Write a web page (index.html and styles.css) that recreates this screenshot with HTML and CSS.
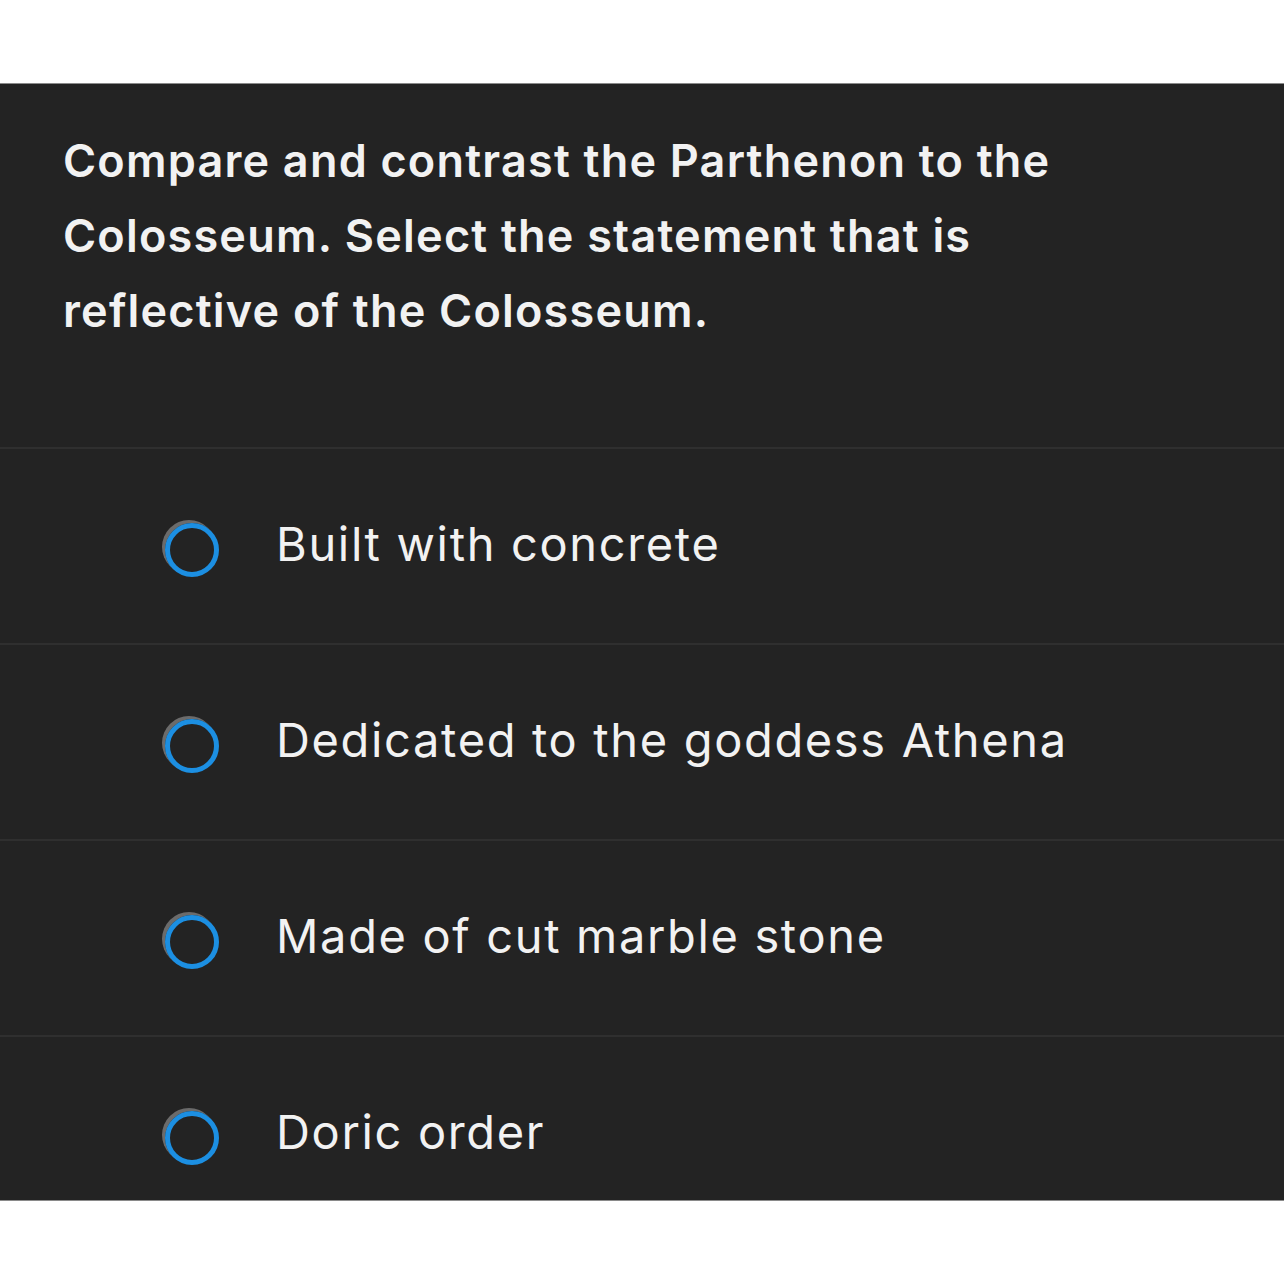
FILE: index.html
```html
<!DOCTYPE html>
<html lang="en">
<head>
  <meta charset="UTF-8">
  <title>Question</title>
  <link rel="stylesheet" href="styles.css">
</head>
<body>
  <div class="card">
    <div class="question">
      Compare and contrast the Parthenon to the Colosseum. Select the statement that is reflective of the Colosseum.
    </div>
    <div class="option">
      <span class="radio"></span>
      <span class="label">Built with concrete</span>
    </div>
    <div class="option">
      <span class="radio"></span>
      <span class="label">Dedicated to the goddess Athena</span>
    </div>
    <div class="option">
      <span class="radio"></span>
      <span class="label">Made of cut marble stone</span>
    </div>
    <div class="option last">
      <span class="radio"></span>
      <span class="label">Doric order</span>
    </div>
  </div>
</body>
</html>
```

FILE: styles.css
```css
body {
  margin: 0;
  padding: 83px 0 0;
  background-color: #fff;
  font-family: Inter, "Liberation Sans", sans-serif;
}
.card {
  background-color: #232323;
  color: #f2f2f2;
  border-top: 1px solid #8a8a8a;
  border-bottom: 1px solid #8a8a8a;
}
.question {
  height: 365px;
  box-sizing: border-box;
  padding: 39px 200px 0 63px;
  font-size: 45px;
  font-weight: 600;
  line-height: 75px;
  letter-spacing: 1.2px;
  border-bottom: 2px solid #2f2f2f;
}
.option {
  height: 196px;
  box-sizing: border-box;
  display: flex;
  align-items: flex-start;
  padding: 66px 0 0 165px;
  border-bottom: 2px solid #2f2f2f;
}
.option.last {
  height: 163px;
  border-bottom: none;
}
.radio {
  width: 44px;
  height: 44px;
  border: 5px solid #1c8fe2;
  border-radius: 50%;
  box-shadow: -3px -3px 0 0 #6b6b6b;
  margin-top: 8px;
  flex-shrink: 0;
}
.label {
  margin-left: 57px;
  font-size: 47px;
  font-weight: 400;
  line-height: 58px;
  letter-spacing: 1.65px;
}
```
